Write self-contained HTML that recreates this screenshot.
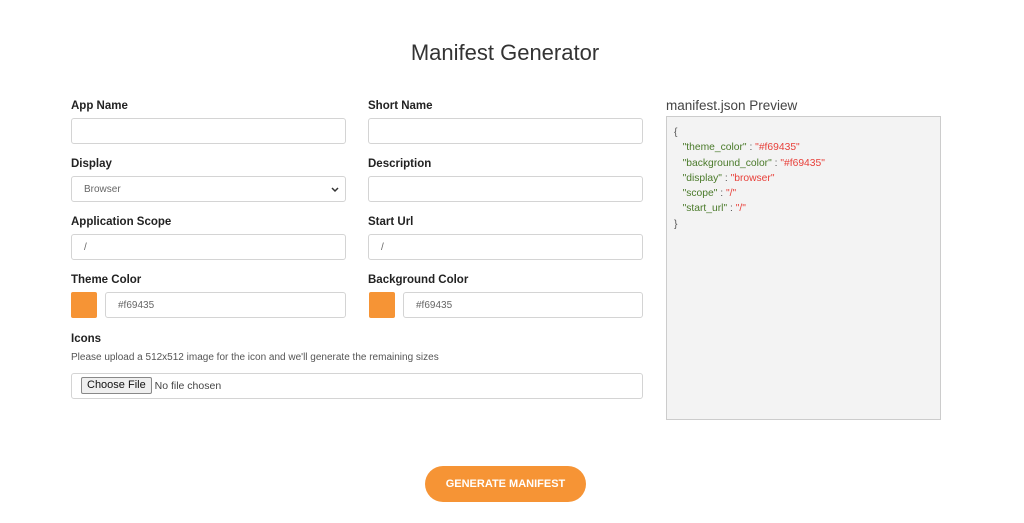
<!DOCTYPE html>
<html><head><style>
*{box-sizing:border-box;margin:0;padding:0}
body{width:1024px;height:523px;background:#fff;font-family:"Liberation Sans",sans-serif;position:relative;overflow:hidden;color:#333}
.a{position:absolute}
h1{position:absolute;left:0;width:1024px;top:40px;text-align:center;font-weight:normal;font-size:22px;color:#333;padding-right:14px}
.l{position:absolute;font-weight:bold;font-size:11.5px;color:#222;line-height:14px}
.i{position:absolute;height:26px;border:1px solid #d4d4d4;border-radius:3px;background:#fff;font-size:10px;color:#666;padding-left:12px;line-height:26px}
.sw{position:absolute;width:26px;height:26px;background:#f69435;border-radius:2px}
pre{font-family:"Liberation Sans",sans-serif;font-size:10.3px;line-height:15.3px;color:#555}
.k{color:#4a7a2a}.v{color:#e8403a}
</style></head><body>
<h1>Manifest Generator</h1>
<div class="l" style="left:71px;top:99px">App Name</div>
<div class="l" style="left:368px;top:99px">Short Name</div>
<div class="i" style="left:71px;top:118px;width:275px"></div>
<div class="i" style="left:368px;top:118px;width:275px"></div>
<div class="l" style="left:71px;top:157px">Display</div>
<div class="l" style="left:368px;top:157px">Description</div>
<div class="i" style="left:71px;top:176px;width:275px">Browser<svg class="a" style="right:6px;top:10px" width="8" height="6" viewBox="0 0 8 6"><path d="M1 1l3 3 3-3" stroke="#333" stroke-width="1.5" fill="none"/></svg></div>
<div class="i" style="left:368px;top:176px;width:275px"></div>
<div class="l" style="left:71px;top:215px">Application Scope</div>
<div class="l" style="left:368px;top:215px">Start Url</div>
<div class="i" style="left:71px;top:234px;width:275px">/</div>
<div class="i" style="left:368px;top:234px;width:275px">/</div>
<div class="l" style="left:71px;top:273px">Theme Color</div>
<div class="l" style="left:368px;top:273px">Background Color</div>
<div class="sw" style="left:71px;top:292px"></div>
<div class="i" style="left:105px;top:292px;width:241px">#f69435</div>
<div class="sw" style="left:369px;top:292px"></div>
<div class="i" style="left:403px;top:292px;width:240px">#f69435</div>
<div class="l" style="left:71px;top:332px">Icons</div>
<div class="a" style="left:71px;top:352px;font-size:10px;color:#555">Please upload a 512x512 image for the icon and we'll generate the remaining sizes</div>
<div class="i" style="left:71px;top:373px;width:572px;padding-left:9px;font-size:10.5px;line-height:24px"><span style="display:inline-block;border:1px solid #888;background:#efefef;border-radius:2px;height:17px;line-height:15px;padding:0 5px;color:#111;font-size:11px;vertical-align:middle;margin-top:-2px">Choose File</span> <span style="color:#444">No file chosen</span></div>
<div class="a" style="left:666px;top:98px;font-size:13.5px;color:#444">manifest.json Preview</div>
<div class="a" style="left:666px;top:116px;width:275px;height:304px;background:#f3f3f3;border:1px solid #ccc;padding:8px 0 0 7px">
<pre>{
   <span class="k">"theme_color"</span> : <span class="v">"#f69435"</span>
   <span class="k">"background_color"</span> : <span class="v">"#f69435"</span>
   <span class="k">"display"</span> : <span class="v">"browser"</span>
   <span class="k">"scope"</span> : <span class="v">"/"</span>
   <span class="k">"start_url"</span> : <span class="v">"/"</span>
}</pre></div>
<div class="a" style="left:425px;top:466px;width:161px;height:36px;background:#f69435;border-radius:18px;color:#fff;font-weight:bold;font-size:11px;text-align:center;line-height:37px">GENERATE MANIFEST</div>
</body></html>
